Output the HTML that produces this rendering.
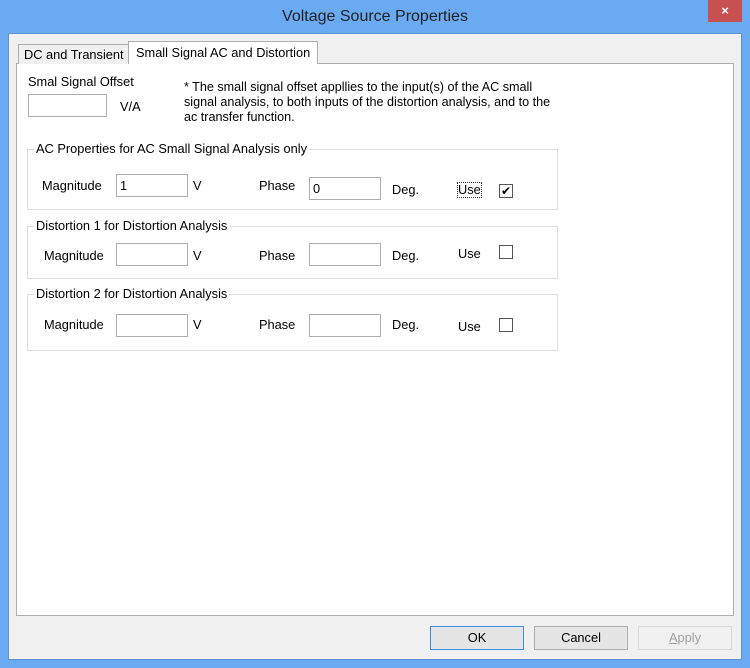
<!DOCTYPE html>
<html><head><style>
*{margin:0;padding:0;box-sizing:border-box}
body{width:750px;height:668px;background:#6aaaf2;position:relative;overflow:hidden;font-family:"Liberation Sans",sans-serif;font-size:12.8px;color:#000}
.a{position:absolute;white-space:nowrap}
.client{position:absolute;left:8px;top:33px;width:734px;height:627px;background:#f0f0f0;border:1px solid #5b93d4}
.page{position:absolute;left:16px;top:63px;width:718px;height:553px;background:#fff;border:1px solid #adadad}
.tab{position:absolute;border:1px solid #adadad;border-bottom:none}
.in{position:absolute;height:23px;background:#fff;border:1px solid #adadad;padding:3px 0 0 3px}
.grp{position:absolute;border:1px solid #dcdcdc}
.cb{position:absolute;width:14px;height:14px;border:1px solid #555;background:#fff}
.btn{position:absolute;top:626px;width:94px;height:24px;border:1px solid #adadad;background:#e5e5e5;text-align:center;line-height:22px}
</style></head><body>
<div class="a" style="left:0;top:8px;width:750px;text-align:center;font-size:16px;color:#222">Voltage Source Properties</div>
<div class="a" style="left:708px;top:0;width:34px;height:22px;background:#c75050;color:#fff;text-align:center;font-weight:bold;font-size:13px;line-height:22px">×</div>
<div class="client"></div>
<div class="page"></div>
<div class="tab" style="left:18px;top:44px;width:111px;height:20px;background:#f0f0f0"></div>
<div class="a" style="left:24px;top:47px">DC and Transient</div>
<div class="tab" style="left:128px;top:41px;width:190px;height:23px;background:#fff"></div>
<div class="a" style="left:136px;top:45px">Small Signal AC and Distortion</div>

<div class="a" style="left:28px;top:74px">Smal Signal Offset</div>
<div class="in" style="left:28px;top:94px;width:79px"></div>
<div class="a" style="left:120px;top:99px">V/A</div>
<div class="a" style="left:184px;top:80px;line-height:15px;font-size:12.6px">* The small signal offset appllies to the input(s) of the AC small<br>signal analysis, to both inputs of the distortion analysis, and to the<br>ac transfer function.</div>

<div class="grp" style="left:27px;top:149px;width:531px;height:61px"></div>
<div class="a" style="left:34px;top:141px;background:#fff;padding:0 2px">AC Properties for AC Small Signal Analysis only</div>
<div class="a" style="left:42px;top:178px">Magnitude</div>
<div class="in" style="left:116px;top:174px;width:72px">1</div>
<div class="a" style="left:193px;top:178px">V</div>
<div class="a" style="left:259px;top:178px">Phase</div>
<div class="in" style="left:309px;top:177px;width:72px">0</div>
<div class="a" style="left:392px;top:182px">Deg.</div>
<div class="a" style="left:457px;top:182px;border:1px dotted #333;line-height:14px">Use</div>
<div class="cb" style="left:499px;top:184px;font-size:12px;line-height:12px;text-align:center">✔</div>

<div class="grp" style="left:27px;top:226px;width:531px;height:53px"></div>
<div class="a" style="left:34px;top:218px;background:#fff;padding:0 2px">Distortion 1 for Distortion Analysis</div>
<div class="a" style="left:44px;top:248px">Magnitude</div>
<div class="in" style="left:116px;top:243px;width:72px"></div>
<div class="a" style="left:193px;top:248px">V</div>
<div class="a" style="left:259px;top:248px">Phase</div>
<div class="in" style="left:309px;top:243px;width:72px"></div>
<div class="a" style="left:392px;top:248px">Deg.</div>
<div class="a" style="left:458px;top:246px">Use</div>
<div class="cb" style="left:499px;top:245px"></div>

<div class="grp" style="left:27px;top:294px;width:531px;height:57px"></div>
<div class="a" style="left:34px;top:286px;background:#fff;padding:0 2px">Distortion 2 for Distortion Analysis</div>
<div class="a" style="left:44px;top:317px">Magnitude</div>
<div class="in" style="left:116px;top:314px;width:72px"></div>
<div class="a" style="left:193px;top:317px">V</div>
<div class="a" style="left:259px;top:317px">Phase</div>
<div class="in" style="left:309px;top:314px;width:72px"></div>
<div class="a" style="left:392px;top:317px">Deg.</div>
<div class="a" style="left:458px;top:319px">Use</div>
<div class="cb" style="left:499px;top:318px"></div>

<div class="btn" style="left:430px;border:1px solid #3c8fdc">OK</div>
<div class="btn" style="left:534px">Cancel</div>
<div class="btn" style="left:638px;color:#a0a0a0;background:#f0f0f0;border-color:#d9d9d9"><u>A</u>pply</div>
</body></html>
